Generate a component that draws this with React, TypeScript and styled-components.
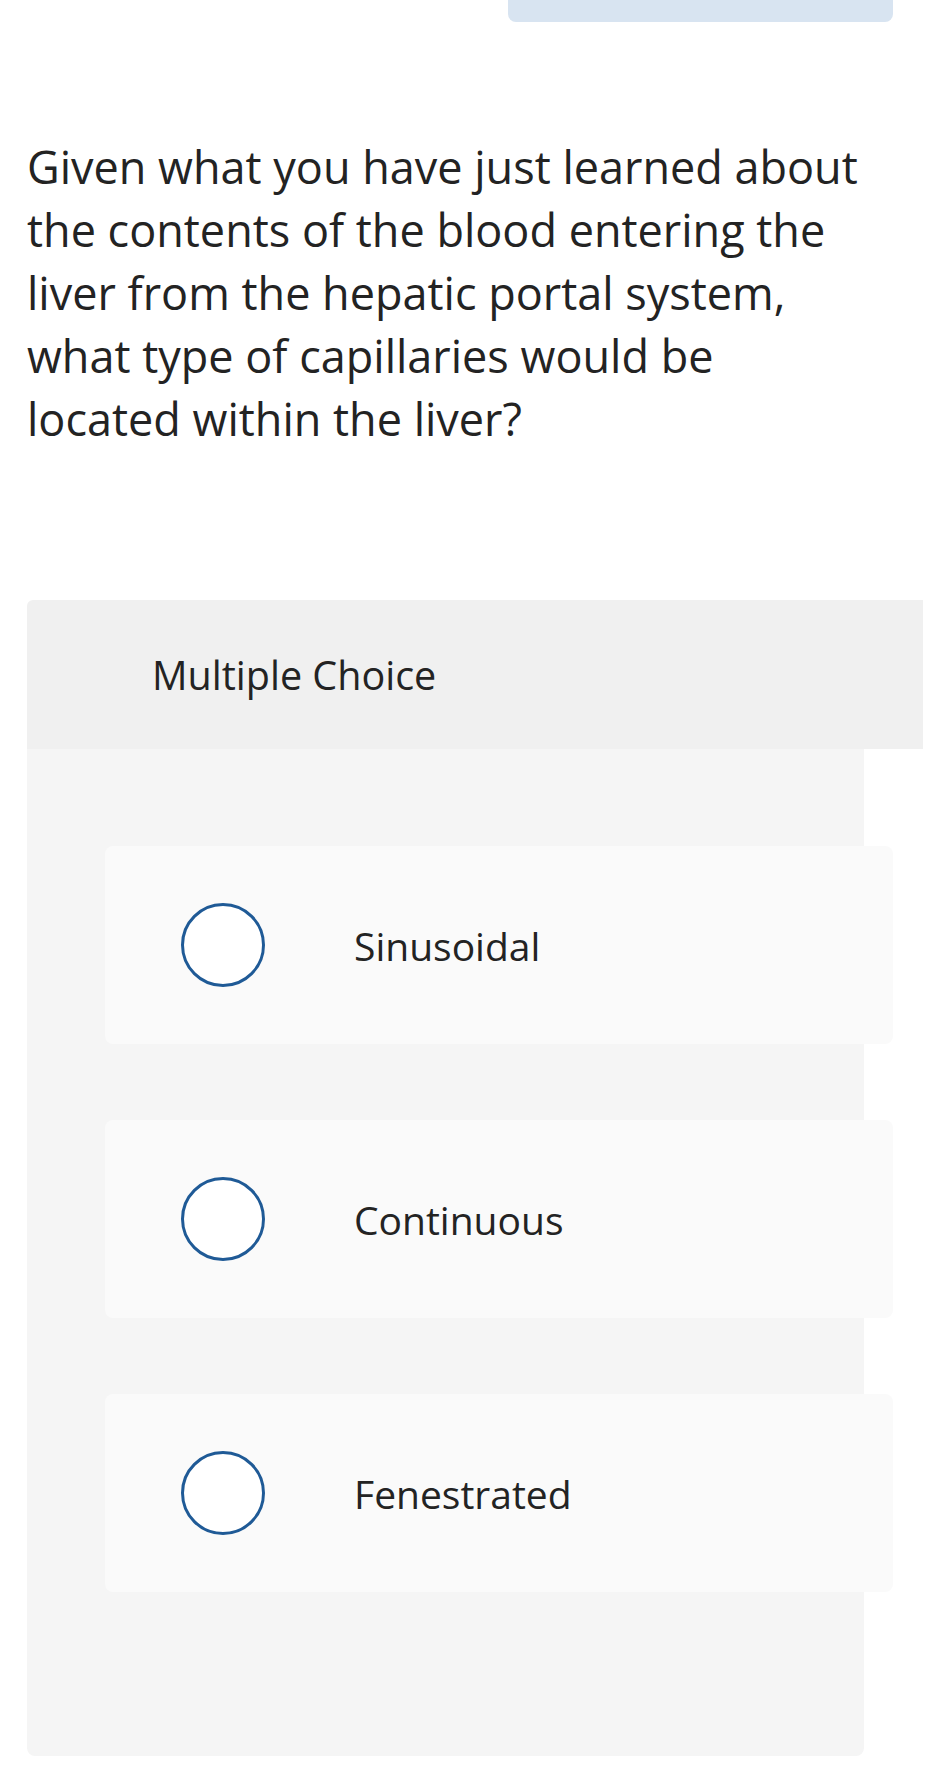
import React from "react";
import styled, { createGlobalStyle } from "styled-components";

const GlobalStyle = createGlobalStyle`
  html, body {
    margin: 0;
    padding: 0;
    background: #ffffff;
  }
  body {
    font-family: "Open Sans", "Noto Sans", sans-serif;
    color: #232323;
    overflow-x: hidden;
  }
  * { box-sizing: border-box; }
`;

const Page = styled.div`
  width: 937px;
  min-height: 1781px;
  display: flex;
  flex-direction: column;
`;

const TopBarRow = styled.div`
  display: flex;
  justify-content: flex-end;
  padding-right: 44px;
`;

const TopBar = styled.div`
  width: 385px;
  height: 22px;
  background: #d8e4f1;
  border-radius: 0 0 8px 8px;
`;

const Question = styled.p`
  margin: 113px 0 0 27px;
  width: 850px;
  font-size: 45px;
  line-height: 63px;
  font-weight: 400;
  color: #232323;
`;

const Card = styled.section`
  margin: 150px 0 0 27px;
  width: 837px;
  display: flex;
  flex-direction: column;
`;

const CardHeader = styled.div`
  width: 896px;
  height: 149px;
  background: #f0f0f0;
  border-radius: 6px 0 0 0;
  display: flex;
  align-items: center;
  padding-left: 125px;
  font-size: 39.5px;
  color: #232323;
`;

const CardBody = styled.div`
  background: #f5f5f5;
  border-radius: 0 0 8px 8px;
  padding: 97px 0 164px 78px;
  display: flex;
  flex-direction: column;
  gap: 76px;
`;

const Option = styled.label`
  width: 788px;
  height: 198px;
  background: #fafafa;
  border-radius: 8px;
  display: flex;
  align-items: center;
  padding-left: 76px;
  gap: 89px;
  cursor: pointer;
`;

const Radio = styled.span`
  flex: none;
  width: 84px;
  height: 84px;
  border-radius: 50%;
  border: 3px solid #1f5a96;
  background: #ffffff;
`;

const OptionText = styled.span`
  font-size: 39px;
  color: #232323;
`;

const options = ["Sinusoidal", "Continuous", "Fenestrated"];

export default function App() {
  return (
    <>
      <GlobalStyle />
      <Page>
        <TopBarRow>
          <TopBar />
        </TopBarRow>
        <Question>
          Given what you have just learned about the contents of the blood
          entering the liver from the hepatic portal system, what type of
          capillaries would be located within the liver?
        </Question>
        <Card>
          <CardHeader>Multiple Choice</CardHeader>
          <CardBody>
            {options.map((o) => (
              <Option key={o}>
                <Radio />
                <OptionText>{o}</OptionText>
              </Option>
            ))}
          </CardBody>
        </Card>
      </Page>
    </>
  );
}
